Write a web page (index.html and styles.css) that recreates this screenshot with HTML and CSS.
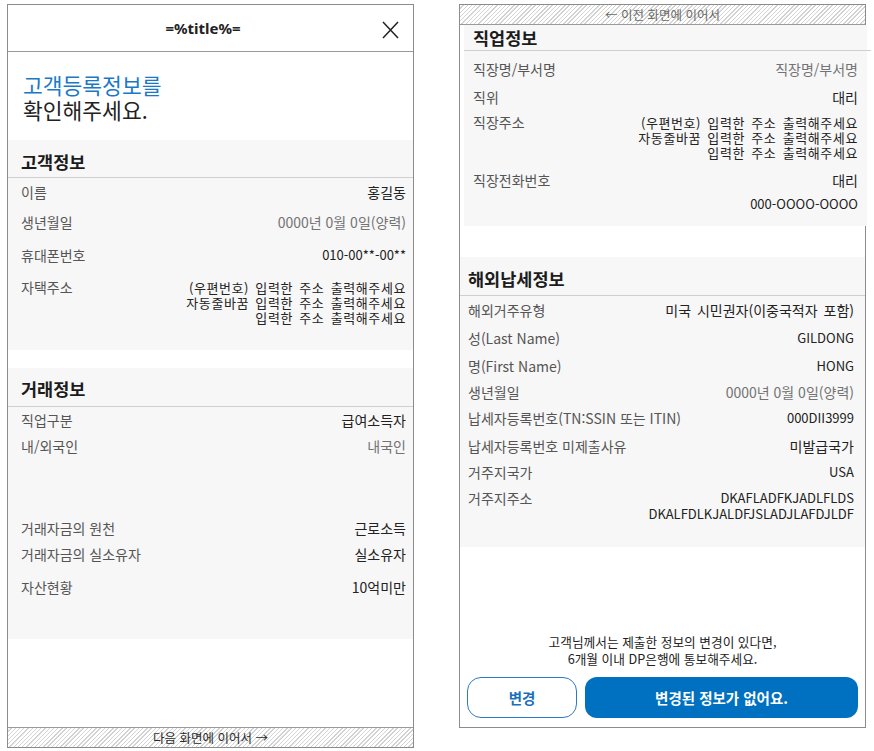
FILE: index.html
```html
<!DOCTYPE html>
<html lang="ko">
<head>
<meta charset="utf-8">
<title>고객등록정보 확인</title>
<link rel="stylesheet" href="styles.css">
</head>
<body>
<div class="page">
  <section class="panel panel-left">
    <header class="topbar">
      <h1 class="title">=%title%=</h1>
      <button class="close" type="button" aria-label="닫기">
        <svg width="17" height="18" viewBox="0 0 17 18"><path d="M1 1 L16 17 M16 1 L1 17" stroke="#222" stroke-width="1.5" fill="none"/></svg>
      </button>
    </header>
    <div class="intro">
      <p class="hl">고객등록정보를</p>
      <p>확인해주세요.</p>
    </div>
    <section class="group g-cust">
      <h2>고객정보</h2>
      <dl class="rows">
        <div class="row h30"><dt>이름</dt><dd>홍길동</dd></div>
        <div class="row h33"><dt>생년월일</dt><dd class="muted">0000년 0월 0일(양력)</dd></div>
        <div class="row h33"><dt>휴대폰번호</dt><dd class="num">010-00**-00**</dd></div>
        <div class="row addr"><dt>자택주소</dt><dd>(우편번호) 입력한 주소 출력해주세요<br>자동줄바꿈 입력한 주소 출력해주세요<br>입력한 주소 출력해주세요</dd></div>
      </dl>
    </section>
    <section class="group g-deal">
      <h2>거래정보</h2>
      <dl class="rows">
        <div class="row"><dt>직업구분</dt><dd>급여소득자</dd></div>
        <div class="row"><dt>내/외국인</dt><dd class="muted">내국인</dd></div>
        <div class="blank"></div>
        <div class="row"><dt>거래자금의 원천</dt><dd>근로소득</dd></div>
        <div class="row h33"><dt>거래자금의 실소유자</dt><dd>실소유자</dd></div>
        <div class="row"><dt>자산현황</dt><dd>10억미만</dd></div>
      </dl>
    </section>
    <div class="filler"></div>
    <div class="cont cont-bottom">다음 화면에 이어서 →</div>
  </section>

  <section class="panel panel-right">
    <div class="cont cont-top">← 이전 화면에 이어서</div>
    <section class="group g-job">
      <h2>직업정보</h2>
      <dl class="rows">
        <div class="row h28"><dt>직장명/부서명</dt><dd class="muted">직장명/부서명</dd></div>
        <div class="row"><dt>직위</dt><dd>대리</dd></div>
        <div class="row addr h28"><dt>직장주소</dt><dd>(우편번호) 입력한 주소 출력해주세요<br>자동줄바꿈 입력한 주소 출력해주세요<br>입력한 주소 출력해주세요</dd></div>
        <div class="row h24"><dt>직장전화번호</dt><dd>대리</dd></div>
        <div class="row"><dt></dt><dd class="num">000-OOOO-OOOO</dd></div>
      </dl>
    </section>
    <section class="group g-tax">
      <h2>해외납세정보</h2>
      <dl class="rows">
        <div class="row h28"><dt>해외거주유형</dt><dd class="spaced">미국 시민권자(이중국적자 포함)</dd></div>
        <div class="row h28"><dt>성(Last Name)</dt><dd class="num">GILDONG</dd></div>
        <div class="row"><dt>명(First Name)</dt><dd class="num">HONG</dd></div>
        <div class="row"><dt>생년월일</dt><dd class="muted">0000년 0월 0일(양력)</dd></div>
        <div class="row h28"><dt>납세자등록번호(TN:SSIN 또는 ITIN)</dt><dd class="num">000DII3999</dd></div>
        <div class="row"><dt>납세자등록번호 미제출사유</dt><dd>미발급국가</dd></div>
        <div class="row"><dt>거주지국가</dt><dd class="num">USA</dd></div>
        <div class="row"><dt>거주지주소</dt><dd class="num">DKAFLADFKJADLFLDS<br>DKALFDLKJALDFJSLADJLAFDJLDF</dd></div>
      </dl>
    </section>
    <div class="filler"></div>
    <p class="notice">고객님께서는 제출한 정보의 변경이 있다면,<br>6개월 이내 DP은행에 통보해주세요.</p>
    <div class="actions">
      <button class="btn btn-line" type="button">변경</button>
      <button class="btn btn-fill" type="button">변경된 정보가 없어요.</button>
    </div>
  </section>
</div>
</body>
</html>
```

FILE: styles.css
```css
* { box-sizing: border-box; margin: 0; padding: 0; }

body {
  font-family: "Noto Sans CJK KR", "Noto Sans", sans-serif;
  color: #222;
  background: #fff;
  width: 874px;
  height: 751px;
  overflow: hidden;
}

.page {
  display: flex;
  align-items: flex-start;
  padding-top: 4px;
}

.panel {
  border: 1px solid #8c8c8c;
  display: flex;
  flex-direction: column;
  width: 407px;
  background: #fff;
}

.panel-left { margin-left: 7px; height: 744px; }
.panel-right { margin-left: 45px; height: 724px; }

/* header */
.topbar {
  height: 47px;
  border-bottom: 1px solid #9a9a9a;
  display: flex;
  align-items: center;
  padding-right: 14px;
}

.title {
  flex: 1;
  text-align: center;
  font-family: "Noto Sans", sans-serif;
  font-weight: 700;
  font-size: 15px;
  padding-left: 16px;
}

.close {
  width: 17px;
  height: 18px;
  border: 0;
  background: none;
  display: flex;
  margin-top: 3px;
}

.intro {
  padding: 20px 15px 18px;
  font-size: 21.5px;
  line-height: 25px;
  color: #222;
}

.intro .hl { color: #1a78c6; }

/* groups */
.group { background: #f7f7f7; }

.group h2 {
  font-size: 17.5px;
  font-weight: 700;
  line-height: 22px;
  border-bottom: 1px solid #cfcfcf;
  color: #1c1c1c;
}

.rows { display: block; }

.row {
  display: flex;
  justify-content: space-between;
  gap: 12px;
  padding: 5px 0;
  font-size: 14px;
  line-height: 16px;
}

.row dt { color: #555; white-space: nowrap; }
.row dd { text-align: right; color: #222; }
.row dd.muted { color: #737373; }
.row dd.num { font-size: 13px; }
.row dd.spaced { word-spacing: 2px; }
.row.addr { line-height: 15px; }
.row.addr dd { font-size: 13px; letter-spacing: 0.6px; word-spacing: 2px; }

.h24 { padding-bottom: 3px; }
.h28 { padding-bottom: 7px; }
.h30 { padding-bottom: 9px; }
.h33 { padding-bottom: 12px; }

.blank { height: 56px; }

.g-cust h2 { padding: 11px 13px 4px; }
.g-cust .rows { padding: 1px 7px 20px 13px; }

.g-deal { margin-top: 18px; }
.g-deal h2 { padding: 10px 13px 6px; }
.g-deal .rows { padding: 0 7px 39px 13px; }

.g-job { margin: 0 -2px 0 4px; }
.g-job h2 { padding: 2px 9px 1px; margin-right: -4px; }
.g-job .rows { padding: 5px 9px 9px 9px; }

.g-tax { margin-top: 31px; }
.g-tax h2 { padding: 11px 8px 5px; }
.g-tax .rows { padding: 1px 11px 20px 8px; }

.filler { flex: 1; }

/* continuation strips */
.cont {
  height: 20px;
  text-align: center;
  font-size: 12.5px;
  line-height: 19px;
  background: repeating-linear-gradient(135deg, #fff 0 2px, #d2d2d2 2px 3px);
}

.cont-bottom { border-top: 1px solid #9a9a9a; color: #2a2a2a; }
.cont-top { border-bottom: 1px solid #9a9a9a; color: #6a6a6a; }

/* footer actions */
.notice {
  text-align: center;
  font-size: 12.7px;
  line-height: 17px;
  color: #222;
  margin-bottom: 10px;
}

.actions {
  display: flex;
  gap: 8px;
  padding: 0 7px 9px;
}

.btn {
  height: 41px;
  font-family: "Noto Sans CJK KR", "Noto Sans", sans-serif;
  font-size: 14.5px;
  font-weight: 700;
  cursor: pointer;
}

.btn-line {
  width: 110px;
  border: 1.5px solid #2a7bc4;
  border-radius: 14px;
  background: #fff;
  color: #1a6fba;
}

.btn-fill {
  flex: 1;
  border: 0;
  border-radius: 12px;
  background: #0070c0;
  color: #fff;
}
```
